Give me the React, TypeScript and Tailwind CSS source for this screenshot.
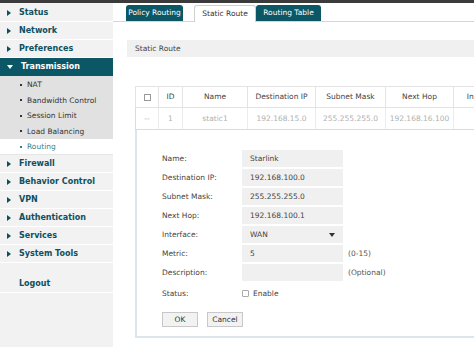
import React from "react";

const menuTop = ["Status", "Network", "Preferences"];
const subItems = ["NAT", "Bandwidth Control", "Session Limit", "Load Balancing"];
const menuBottom = ["Firewall", "Behavior Control", "VPN", "Authentication", "Services", "System Tools"];

function Caret({ down }: { down?: boolean }) {
  return down ? (
    <span className="mr-[8px] h-0 w-0 border-x-[3px] border-t-[4px] border-x-transparent border-t-white" />
  ) : (
    <span className="mr-[8px] h-0 w-0 border-y-[3px] border-l-[4px] border-y-transparent border-l-[#0d4f5c]" />
  );
}

function MenuItem({ label }: { label: string }) {
  return (
    <div className="flex h-[18px] items-center border-b border-white pl-[7px] text-[8px] font-bold text-[#0d5060]">
      <Caret />
      {label}
    </div>
  );
}

function Sidebar() {
  return (
    <aside className="w-[113px] shrink-0 bg-[#f2f2f2] pt-[1px]">
      {menuTop.map((m) => (
        <MenuItem key={m} label={m} />
      ))}
      <div className="flex h-[18px] items-center bg-[#0b5766] pl-[7px] text-[8px] font-bold text-white">
        <Caret down />
        Transmission
      </div>
      <div className="bg-[#e1e1e1] pt-[1px]">
        {subItems.map((s) => (
          <div key={s} className="flex h-[15.5px] items-center pl-[20px] text-[7.5px] text-[#333]">
            <span className="mr-[5px] h-[2px] w-[2px] bg-[#333]" />
            {s}
          </div>
        ))}
      </div>
      <div className="flex h-[16px] items-center border-b border-[#e6e6e6] bg-white pl-[20px] text-[7.5px] text-[#3a7f8c]">
        <span className="mr-[5px] h-[2px] w-[2px] bg-[#3a7f8c]" />
        Routing
      </div>
      {menuBottom.map((m) => (
        <MenuItem key={m} label={m} />
      ))}
      <div className="mt-[12px] flex h-[18px] items-center border-b border-white pl-[19px] text-[8px] font-bold text-[#0d5060]">
        Logout
      </div>
    </aside>
  );
}

function Field({ label, value, note, select }: { label: string; value?: string; note?: string; select?: boolean }) {
  return (
    <div className="flex h-[19px] items-center">
      <div className="w-[80px] text-[7.5px] text-[#444]">{label}</div>
      <div className="flex h-[17px] w-[101px] items-center justify-between bg-[#f0f0f0] px-[8px] text-[7.5px] text-[#444]">
        <span>{value}</span>
        {select && <span className="h-0 w-0 border-x-[3px] border-t-[4px] border-x-transparent border-t-[#333]" />}
      </div>
      {note && <div className="ml-[5px] text-[7.5px] text-[#555]">{note}</div>}
    </div>
  );
}

const cols = [
  { h: "", w: "w-[23px]" },
  { h: "ID", w: "w-[24px]" },
  { h: "Name", w: "w-[65px]" },
  { h: "Destination IP", w: "w-[68px]" },
  { h: "Subnet Mask", w: "w-[70px]" },
  { h: "Next Hop", w: "w-[68px]" },
  { h: "Interface", w: "w-[60px]" },
];

const row = ["--", "1", "static1", "192.168.15.0", "255.255.255.0", "192.168.16.100", ""];

export default function App() {
  return (
    <div className="flex h-[347px] w-[474px] flex-col overflow-hidden bg-white font-['DejaVu_Sans',sans-serif]">
      <div className="h-[3px] shrink-0 bg-[#3b3b3b]" />
      <div className="flex min-h-0 flex-1">
        <Sidebar />
        <main className="min-w-0 flex-1 overflow-hidden">
          <div className="flex h-[19px] items-end whitespace-nowrap border-b border-[#d6d6d6] pl-[13px] pt-[3px] text-[7.5px]">
            <div className="mr-[11px] flex h-[16px] w-[57px] items-center justify-center rounded-t-[3px] bg-[#0b5766] text-white">
              Policy Routing
            </div>
            <div className="-mb-px flex h-[17px] w-[62px] items-center justify-center rounded-t-[3px] border border-b-0 border-[#cfcfcf] bg-white text-[#333]">
              Static Route
            </div>
            <div className="flex h-[16px] w-[65px] items-center justify-center rounded-t-[3px] bg-[#0b5766] text-white">
              Routing Table
            </div>
          </div>
          <div className="ml-[14px] mt-[18px] flex h-[17px] items-center bg-[#f0f0f0] pl-[8px] text-[7.5px] text-[#444]">
            Static Route
          </div>
          <div className="ml-[22px] mt-[29px] w-[420px]">
            <div className="flex h-[22px] whitespace-nowrap border border-[#e3e3e3] text-[7.5px] text-[#444]">
              {cols.map((c, i) => (
                <div key={i} className={`${c.w} flex shrink-0 items-center justify-center border-r border-[#e3e3e3]`}>
                  {i === 0 ? <span className="h-[7px] w-[7px] border border-[#999] bg-white" /> : c.h}
                </div>
              ))}
            </div>
            <div className="flex h-[22px] border-x border-b border-[#d2dde6] text-[7.5px] text-[#b0b0b0]">
              {cols.map((c, i) => (
                <div key={i} className={`${c.w} flex shrink-0 items-center justify-center border-r border-[#ececec]`}>
                  {row[i]}
                </div>
              ))}
            </div>
            <div className="h-[208px] border-b-2 border-l-2 border-[#dde5ec] pl-[25px] pt-[19px]">
              <Field label="Name:" value="Starlink" />
              <Field label="Destination IP:" value="192.168.100.0" />
              <Field label="Subnet Mask:" value="255.255.255.0" />
              <Field label="Next Hop:" value="192.168.100.1" />
              <Field label="Interface:" value="WAN" select />
              <Field label="Metric:" value="5" note="(0-15)" />
              <Field label="Description:" note="(Optional)" />
              <div className="mt-[2px] flex h-[19px] items-center text-[7.5px] text-[#444]">
                <div className="w-[80px]">Status:</div>
                <span className="mr-[4px] h-[7px] w-[7px] rounded-[1px] border border-[#aaa] bg-white" />
                Enable
              </div>
              <div className="mt-[9px] flex gap-[9px] text-[7.5px] text-[#333]">
                <div className="flex h-[15px] w-[36px] items-center justify-center border border-[#c8c8c8] bg-[#f2f2f2]">OK</div>
                <div className="flex h-[15px] w-[36px] items-center justify-center border border-[#c8c8c8] bg-[#f2f2f2]">Cancel</div>
              </div>
            </div>
          </div>
        </main>
      </div>
    </div>
  );
}
